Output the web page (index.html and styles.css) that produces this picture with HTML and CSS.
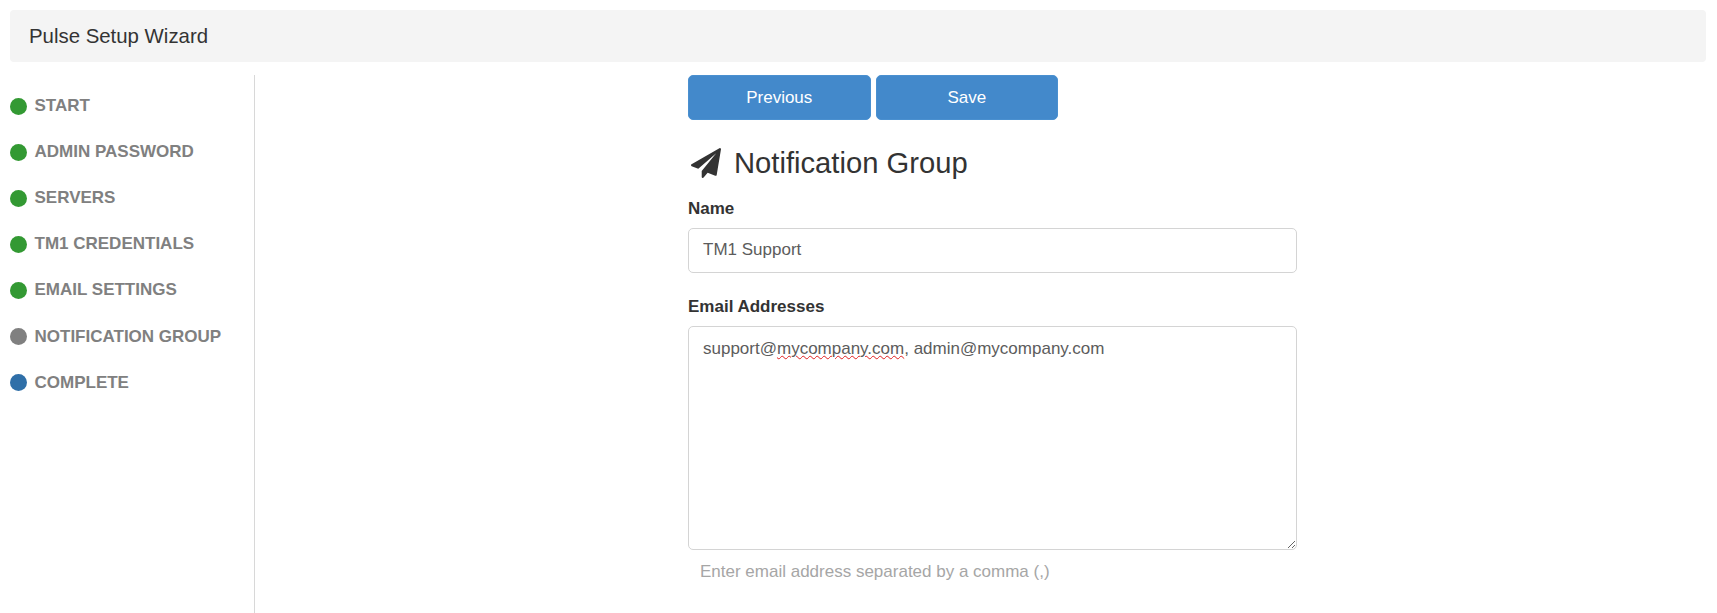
FILE: index.html
```html
<!DOCTYPE html>
<html lang="en">
<head>
    <meta charset="UTF-8">
    <title>Pulse Setup Wizard</title>
    <link rel="stylesheet" href="styles.css">
</head>
<body>
    <div class="navbar">Pulse Setup Wizard</div>
    <div class="wizard">
        <ul class="steps">
            <li class="step"><span class="dot done"></span>START</li>
            <li class="step"><span class="dot done"></span>ADMIN PASSWORD</li>
            <li class="step"><span class="dot done"></span>SERVERS</li>
            <li class="step"><span class="dot done"></span>TM1 CREDENTIALS</li>
            <li class="step"><span class="dot done"></span>EMAIL SETTINGS</li>
            <li class="step"><span class="dot current"></span>NOTIFICATION GROUP</li>
            <li class="step"><span class="dot todo"></span>COMPLETE</li>
        </ul>
        <div class="content">
            <div class="buttons">
                <button class="btn" type="button">Previous</button>
                <button class="btn" type="button">Save</button>
            </div>
            <h1 class="title">
                <svg class="title-icon" viewBox="0 0 1792 1792"><path d="M1764 11q33 24 27 64l-256 1536q-5 29-32 45-14 8-31 8-11 0-24-5l-453-185-242 295q-18 23-49 23-13 0-22-4-19-7-30.5-23.5t-11.5-36.5v-349l864-1059-1069 925-395-162q-37-14-40-55-2-40 32-59l1664-960q15-9 32-9 20 0 36 11z"/></svg>
                Notification Group
            </h1>
            <label class="field-label">Name</label>
            <div class="control name-control">TM1 Support</div>
            <label class="field-label email-label">Email Addresses</label>
            <div class="control email-control">support@<span class="misspelled">mycompany.com</span>, admin@mycompany.com</div>
            <p class="help">Enter email address separated by a comma (,)</p>
        </div>
    </div>
</body>
</html>
```

FILE: styles.css
```css
* {
    box-sizing: border-box;
}
html, body {
    height: 100%;
}
body {
    margin: 0;
    padding: 10px 11px 0 10px;
    font-family: "Liberation Sans", Arial, sans-serif;
    color: #333;
    background-color: #fff;
    overflow: hidden;
}
.navbar {
    height: 52px;
    padding-left: 19px;
    line-height: 52px;
    font-size: 20.4px;
    background-color: #f4f4f4;
    border-radius: 4px;
}
.wizard {
    display: flex;
    height: 541px;
    margin-top: 13px;
}
.steps {
    width: 245px;
    margin: 0;
    padding: 8px 0 0;
    list-style: none;
    border-right: 1px solid #d8d8d8;
}
.step {
    display: flex;
    align-items: center;
    height: 46.1px;
    font-size: 17px;
    font-weight: bold;
    color: #808080;
}
.dot {
    width: 17px;
    height: 17px;
    margin-right: 7.5px;
    border-radius: 50%;
}
.dot.done {
    background-color: #339933;
}
.dot.current {
    background-color: #808080;
}
.dot.todo {
    background-color: #2f6fa8;
}
.content {
    width: 609px;
    margin-left: 433px;
}
.buttons {
    display: flex;
    gap: 5px;
}
.btn {
    width: 182.5px;
    height: 45px;
    padding: 0;
    font-family: inherit;
    font-size: 17px;
    color: #fff;
    background-color: #4389cb;
    border: 1px solid #4a90d0;
    border-radius: 5px;
}
.title {
    display: flex;
    align-items: center;
    margin: 25px 0 0;
    height: 36px;
    font-size: 29.2px;
    font-weight: normal;
}
.title-icon {
    width: 30px;
    height: 30px;
    margin: 0 13px 0 3px;
    fill: #333;
}
.field-label {
    display: block;
    margin-top: 16px;
    height: 31px;
    line-height: 23px;
    font-size: 17px;
    font-weight: bold;
}
.email-label {
    margin-top: 22px;
}
.control {
    width: 100%;
    padding: 0 14px;
    font-size: 17px;
    color: #5c5c5c;
    background-color: #fff;
    border: 1.5px solid #d4d4d4;
    border-radius: 5px;
}
.name-control {
    height: 45px;
    line-height: 42px;
}
.email-control {
    height: 224px;
    padding-top: 11px;
    line-height: 22px;
    overflow: auto;
    resize: vertical;
}
.misspelled {
    text-decoration: underline wavy #e02020 1px;
}
.help {
    margin: 12px 0 0 12px;
    font-size: 17px;
    color: #a6a6a6;
}
```
